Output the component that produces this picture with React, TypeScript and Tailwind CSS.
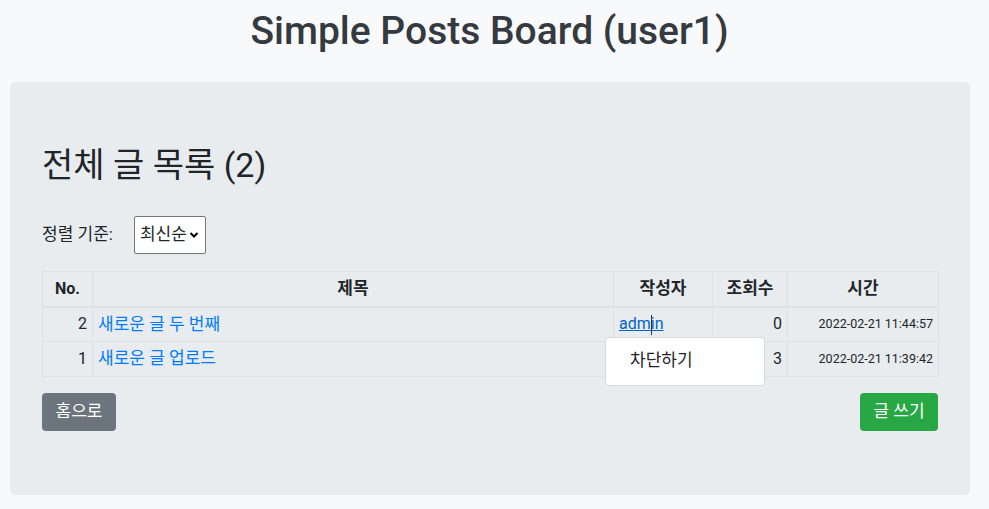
import React from "react";

const font = { fontFamily: 'Roboto, "Noto Sans CJK KR", "Noto Sans", sans-serif' };

export default function App() {
  return (
    <div className="min-h-[509px] bg-[#f8f9fa] text-[#212529]" style={font}>
      <h1 className="text-center text-[39px] font-medium leading-[48px] text-[#343a40] pt-[7px] pr-[10px] h-[82px]">
        Simple Posts Board (user1)
      </h1>
      <div className="ml-[10px] w-[960px] bg-[#e9ecef] rounded-[5px] px-8 pt-16 pb-16">
        <h2 className="text-[34px] font-normal leading-[38px] mb-[32px]">전체 글 목록 (2)</h2>
        <div className="flex items-center h-[38px] mb-[17px]">
          <span className="text-[17px] mr-[21px] text-[#212529]">정렬 기준:</span>
          <div className="h-[38px] w-[72px] bg-white border border-[#767676] rounded-[2px] flex items-center pl-[5px] gap-[2px]">
            <span className="text-[17px]">최신순</span>
            <svg width="10" height="8" viewBox="0 0 10 8">
              <path d="M1.5 2 L5 5.5 L8.5 2" stroke="#000" strokeWidth="2" fill="none" />
            </svg>
          </div>
        </div>
        <table className="w-[896px] border-collapse text-[16px] table-fixed">
          <colgroup>
            <col className="w-[50px]" />
            <col className="w-[521px]" />
            <col className="w-[99px]" />
            <col className="w-[75px]" />
            <col className="w-[151px]" />
          </colgroup>
          <thead>
            <tr className="h-[35px]">
              <th className="border border-[#dee2e6] border-b-2 font-bold text-center px-[5px]">No.</th>
              <th className="border border-[#dee2e6] border-b-2 font-bold text-center px-[5px] text-[17px]">제목</th>
              <th className="border border-[#dee2e6] border-b-2 font-bold text-center px-[5px] text-[17px]">작성자</th>
              <th className="border border-[#dee2e6] border-b-2 font-bold text-center px-[5px] text-[17px]">조회수</th>
              <th className="border border-[#dee2e6] border-b-2 font-bold text-center px-[5px] text-[17px]">시간</th>
            </tr>
          </thead>
          <tbody>
            <tr className="h-[35px]">
              <td className="border border-[#dee2e6] text-right px-[5px]">2</td>
              <td className="border border-[#dee2e6] px-[5px] text-[#007bff] text-[17px]">새로운 글 두 번째</td>
              <td className="border border-[#dee2e6] px-[5px] relative">
                <span className="text-[#0062cc] underline">admin</span>
                <span className="absolute left-[37px] top-[7px] w-px h-[20px] bg-[#333]" />
                <div className="absolute left-[-9px] top-[29px] w-[160px] h-[49px] bg-white border border-[rgba(0,0,0,0.15)] rounded-[4px] z-10 flex items-center pl-[24px] text-[17px] text-[#212529]">
                  차단하기
                </div>
              </td>
              <td className="border border-[#dee2e6] text-right px-[5px]">0</td>
              <td className="border border-[#dee2e6] text-right px-[5px] text-[12.5px]">2022-02-21 11:44:57</td>
            </tr>
            <tr className="h-[35px]">
              <td className="border border-[#dee2e6] text-right px-[5px]">1</td>
              <td className="border border-[#dee2e6] px-[5px] text-[#007bff] text-[17px]">새로운 글 업로드</td>
              <td className="border border-[#dee2e6] px-[5px]"></td>
              <td className="border border-[#dee2e6] text-right px-[5px]">3</td>
              <td className="border border-[#dee2e6] text-right px-[5px] text-[12.5px]">2022-02-21 11:39:42</td>
            </tr>
          </tbody>
        </table>
        <div className="flex justify-between mt-[16px]">
          <button className="h-[38px] w-[74px] bg-[#6c757d] text-white rounded-[4px] text-[17px]">홈으로</button>
          <button className="h-[38px] w-[78px] bg-[#28a745] text-white rounded-[4px] text-[17px]">글 쓰기</button>
        </div>
      </div>
    </div>
  );
}
